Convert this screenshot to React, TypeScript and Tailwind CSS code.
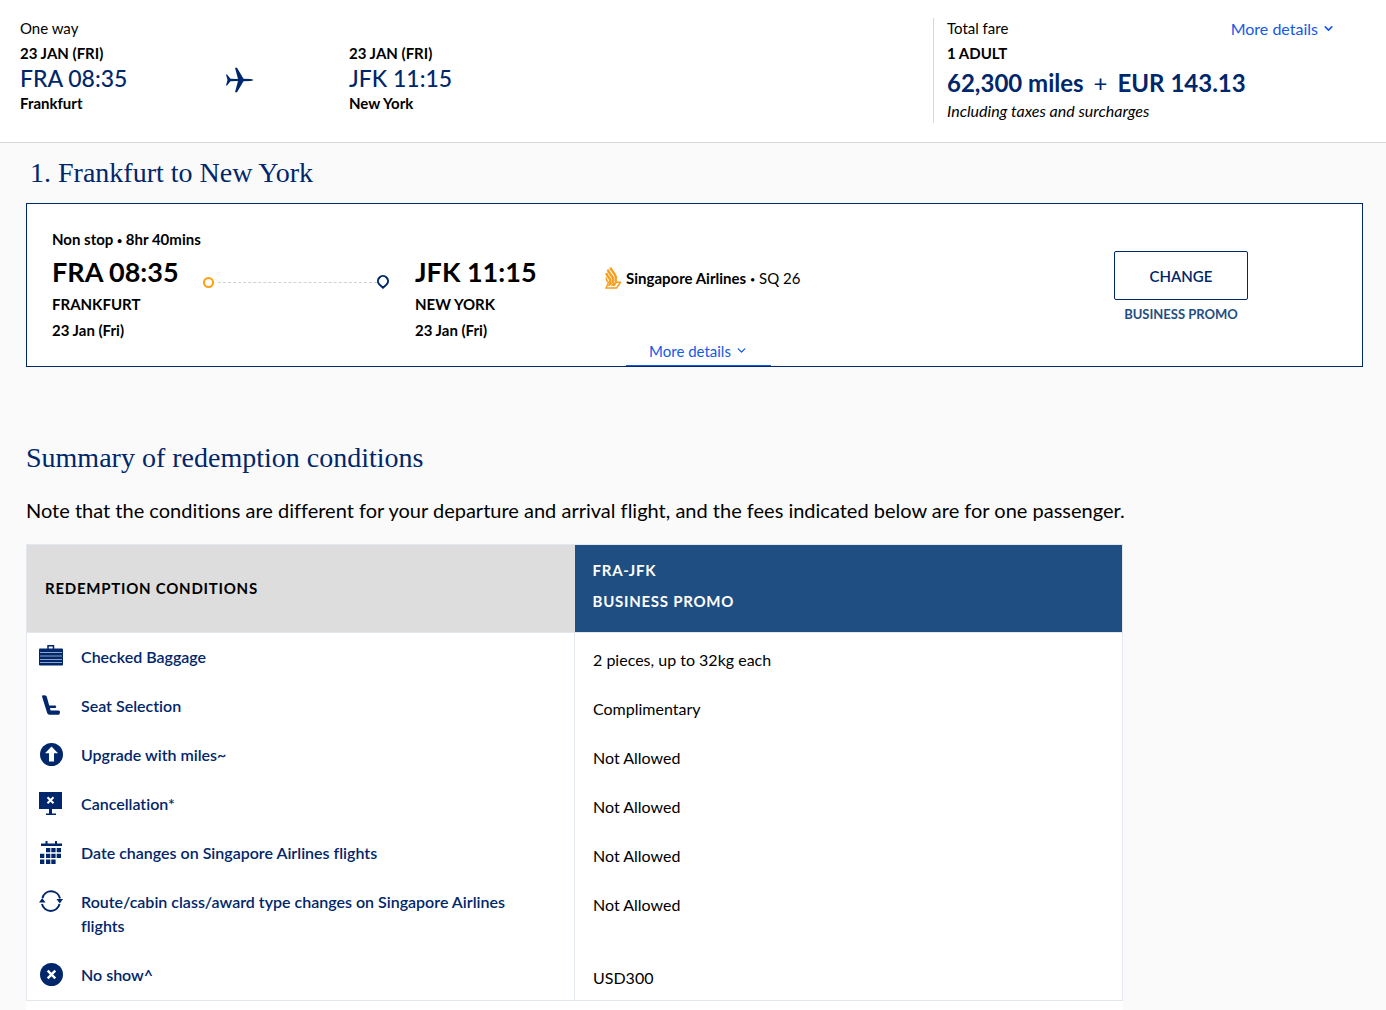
import type { ReactNode } from 'react';
import { ChevronDown } from 'lucide-react';

const icons: Record<string, ReactNode> = {
  baggage: (
    <>
      <path d="M9 5V1.700h5.500V5" fill="none" stroke="#00266b" strokeWidth="1.500" />
      <rect x="0" y="4.500" width="24" height="17" rx="1" />
      <path d="M1 8.500h22M1 12h22M1 15.500h22M1 18.500h22" stroke="#8fa3c6" strokeWidth="1" />
    </>
  ),
  seat: (
    <path d="M3 3.500Q3 2 4.500 2.200L6.500 2.600Q7.600 2.800 8 4.500L10.200 12.500H16Q17.200 12.500 17.200 13.800Q17.200 15 16 15H11L11.600 17.500H19.500Q21.200 17.500 21 19L20.600 21Q20.400 21.800 19.400 21.800H10.500Q8.800 21.800 8.200 20Z" />
  ),
  upgrade: (
    <>
      <circle cx="12.500" cy="12.500" r="11.500" />
      <path d="M12.500 4.500L19 11.300H15V19.500H10V11.300H6Z" fill="#fff" />
    </>
  ),
  cancel: (
    <>
      <path d="M0 1h23v17h-10v4.500h4V24H7v-1.500h3V18H0z" />
      <path d="M8.500 6.300l6 6M14.500 6.300l-6 6" stroke="#fff" strokeWidth="2" />
    </>
  ),
  calendar: (
    <>
      <path d="M2 6V3.500h4.500V1h2v2.500h7.500V1h2v2.500H23V6z" />
      <path d="M7 8h4.300v4.300H7zM12.300 8h4.300v4.300h-4.300zM17.700 8H22v4.300h-4.300zM1 13.700h4.300V18H1zM7 13.700h4.300V18H7zM12.300 13.700h4.300V18h-4.300zM17.700 13.700H22V18h-4.300zM1 19.500h4.300V24H1zM7 19.500h4.300V24H7zM12.300 19.500h4.300V24h-4.300z" />
    </>
  ),
  route: (
    <>
      <path d="M3.500 9A9 9 0 0 1 21 9.500M20.500 15A9 9 0 0 1 3 15" fill="none" stroke="#00266b" strokeWidth="2" />
      <path d="M17.500 10h6.500l-3.200 4.500zM0 13.500h6.500L3.200 9z" />
    </>
  ),
  noShow: (
    <>
      <circle cx="12.500" cy="12.500" r="11.500" />
      <path d="M8.700 8.700l7.600 7.600M16.300 8.700l-7.600 7.600" stroke="#fff" strokeWidth="2.400" />
    </>
  ),
};

const conditions = [
  { icon: 'baggage', label: 'Checked Baggage', value: '2 pieces, up to 32kg each' },
  { icon: 'seat', label: 'Seat Selection', value: 'Complimentary' },
  { icon: 'upgrade', label: 'Upgrade with miles~', value: 'Not Allowed' },
  { icon: 'cancel', label: 'Cancellation*', value: 'Not Allowed' },
  { icon: 'calendar', label: 'Date changes on Singapore Airlines flights', value: 'Not Allowed' },
  {
    icon: 'route',
    label: 'Route/cabin class/award type changes on Singapore Airlines flights',
    value: 'Not Allowed',
  },
  { icon: 'noShow', label: 'No show^', value: 'USD300' },
];

function Plane() {
  return (
    <svg viewBox="0 0 28 26" className="h-[26px] w-7 fill-[#00266b]" aria-hidden="true">
      <path d="M0 7.500H1L4.500 11.700L12 11.900L9 0.800H11L17.500 11.800L24.500 12Q27.300 12.300 27.500 13Q27.300 13.700 24.500 14L17.500 14.200L11 25.200H9L12 14.100L4.500 14.300L1 18.500H0L1.500 13Z" />
    </svg>
  );
}

function AirlineLogo() {
  return (
    <svg viewBox="0 0 16 22" className="h-[22px] w-4" fill="none" stroke="#f99f1c" aria-hidden="true">
      <path d="M5.500 0.500C6 4.500 12 7 10.700 12Q10.300 13.500 11.500 15" strokeWidth="2.400" />
      <path d="M2.800 2.500C3.500 7 8.700 9 7.900 13Q7.700 14.500 8.500 16" strokeWidth="2.400" />
      <path d="M1.300 6C2 10 6 11 5.200 14.500Q5 16 6 17.500" strokeWidth="2.400" />
      <path d="M1.300 10.500Q1 14 3.500 15.500L1 21H11.500L15.500 15.300H11.500L8.500 19M3.500 19L6.500 15.500M6.300 19L9.500 15.500" strokeWidth="1.500" />
    </svg>
  );
}

function Dot() {
  return <span className="align-[1px] text-[9px] leading-none">•</span>;
}

function TripHeader() {
  return (
    <header className="flex border-b border-[#d8d8d8] bg-white pt-4 pb-[19px] pl-5 leading-[25px]">
      <div className="grid flex-1 grid-cols-[206px_123px_1fr]">
        <div>
          <p>One way</p>
          <p className="font-bold">23 JAN (FRI)</p>
          <p className="text-[23px] font-medium text-[#00266b]">FRA 08:35</p>
          <p className="font-bold">Frankfurt</p>
        </div>
        <div className="pt-[51px]">
          <Plane />
        </div>
        <div className="pt-[25px]">
          <p className="font-bold">23 JAN (FRI)</p>
          <p className="text-[23px] font-medium text-[#00266b]">JFK 11:15</p>
          <p className="font-bold">New York</p>
        </div>
      </div>
      <div className="mt-0.5 w-[453px] border-l border-[#d8d8d8] pr-[51px] pl-[13px]">
        <div className="-mt-0.5">
          <div className="flex justify-between">
            <p>Total fare</p>
            <button className="flex items-center gap-1 text-[16px] text-[#1459e8]">
              More details
              <ChevronDown size={13} strokeWidth={3} />
            </button>
          </div>
          <p className="font-bold">1 ADULT</p>
          <p className="flex gap-2.5 text-[24px] leading-[33px] font-bold text-[#00266b]">
            <span>62,300 miles</span>
            <span className="font-normal">+</span>
            <span>EUR 143.13</span>
          </p>
          <p className="text-[16px] leading-6 italic">Including taxes and surcharges</p>
        </div>
      </div>
    </header>
  );
}

function FlightCard() {
  return (
    <article className="border border-[#00266b] bg-white px-[25px]">
      <div className="grid grid-cols-[151px_212px_190px_1fr_134px] pt-[23px] pr-[89px]">
        <div>
          <p className="font-bold whitespace-nowrap">
            Non stop <Dot /> 8hr 40mins
          </p>
          <p className="text-[27px] leading-[41px] font-bold text-black">FRA 08:35</p>
          <p className="font-bold">FRANKFURT</p>
          <p className="mt-0.5 font-bold">23 Jan (Fri)</p>
        </div>
        <div className="flex items-center self-start pt-12 pr-[26px]">
          <span className="size-[11px] rounded-full border-2 border-[#ff9e0f]" />
          <span className="ml-1 flex-1 border-t border-dashed border-[#d2d2d2]" />
          <svg viewBox="0 0 12 14" className="h-3.5 w-3" aria-hidden="true">
            <path d="M6 12.700L2.300 9.400A5 5 0 1 1 9.700 9.400Z" fill="#fff" stroke="#00266b" strokeWidth="2" />
          </svg>
        </div>
        <div className="pt-6">
          <p className="text-[27px] leading-[41px] font-bold text-black">JFK 11:15</p>
          <p className="font-bold">NEW YORK</p>
          <p className="mt-0.5 font-bold">23 Jan (Fri)</p>
        </div>
        <div className="flex items-center gap-[5px] self-start pt-[39px]">
          <AirlineLogo />
          <p>
            <strong>Singapore Airlines</strong> <Dot /> SQ 26
          </p>
        </div>
        <div className="pt-6 text-center">
          <button className="h-[49px] w-full rounded-xs border border-[#00266b] font-semibold text-[#00266b]">
            CHANGE
          </button>
          <p className="pt-0.5 text-[13px] font-bold text-[#1f4e82]">BUSINESS PROMO</p>
        </div>
      </div>
      <div className="flex justify-center pl-2">
        <button className="flex h-6 w-[145px] items-center justify-center gap-1 border-b border-[#1459e8] pb-1.5 text-[#1459e8]">
          More details
          <ChevronDown size={13} strokeWidth={2.5} />
        </button>
      </div>
    </article>
  );
}

function ConditionsTable() {
  return (
    <table className="w-full table-fixed border-collapse border border-[#e2e8ee] bg-white text-left text-[16px] leading-6">
      <thead>
        <tr className="h-[88px] border-b border-[#e2e8ee] text-[15px]">
          <th className="bg-[#dddddd] pb-0.5 pl-[18px] font-bold tracking-wider">REDEMPTION CONDITIONS</th>
          <th className="bg-[#1f4e82] pb-1.5 pl-[18px] leading-[31px] font-bold tracking-wider text-white">
            FRA-JFK
            <br />
            BUSINESS PROMO
          </th>
        </tr>
      </thead>
      <tbody>
        {conditions.map((row) => (
          <tr key={row.label} className="align-top">
            <th className="flex gap-[17px] pt-3 pr-10 pb-[13px] pl-3 font-semibold text-[#00266b]">
              <svg viewBox="0 0 25 25" className="-mt-px -mb-2 size-[25px] shrink-0 fill-[#00266b]" aria-hidden="true">
                {icons[row.icon]}
              </svg>
              {row.label}
            </th>
            <td className="border-l border-[#e2e8ee] pt-[15px] pb-2.5 pl-[18px]">{row.value}</td>
          </tr>
        ))}
      </tbody>
    </table>
  );
}

export default function App() {
  return (
    <div className="min-h-screen bg-[#fafafa] font-['Lato',sans-serif] text-[15px] leading-6 text-black [font-variant-ligatures:none]">
      <TripHeader />
      <main className="pr-[23px] pl-[26px]">
        <h2 className="py-3 pl-1 font-['Liberation_Serif',serif] text-[28px] leading-9 text-[#00266b]">
          1. Frankfurt to New York
        </h2>
        <FlightCard />
        <section className="mt-[73px] max-w-[1097px]">
          <h2 className="font-['Liberation_Serif',serif] text-[28px] leading-9 text-[#00266b]">
            Summary of redemption conditions
          </h2>
          <p className="py-5 text-[20px] leading-7 whitespace-nowrap">
            Note that the conditions are different for your departure and arrival flight, and the fees indicated below
            are for one passenger.
          </p>
          <div className="bg-white pb-[9px]">
            <ConditionsTable />
          </div>
        </section>
      </main>
    </div>
  );
}
